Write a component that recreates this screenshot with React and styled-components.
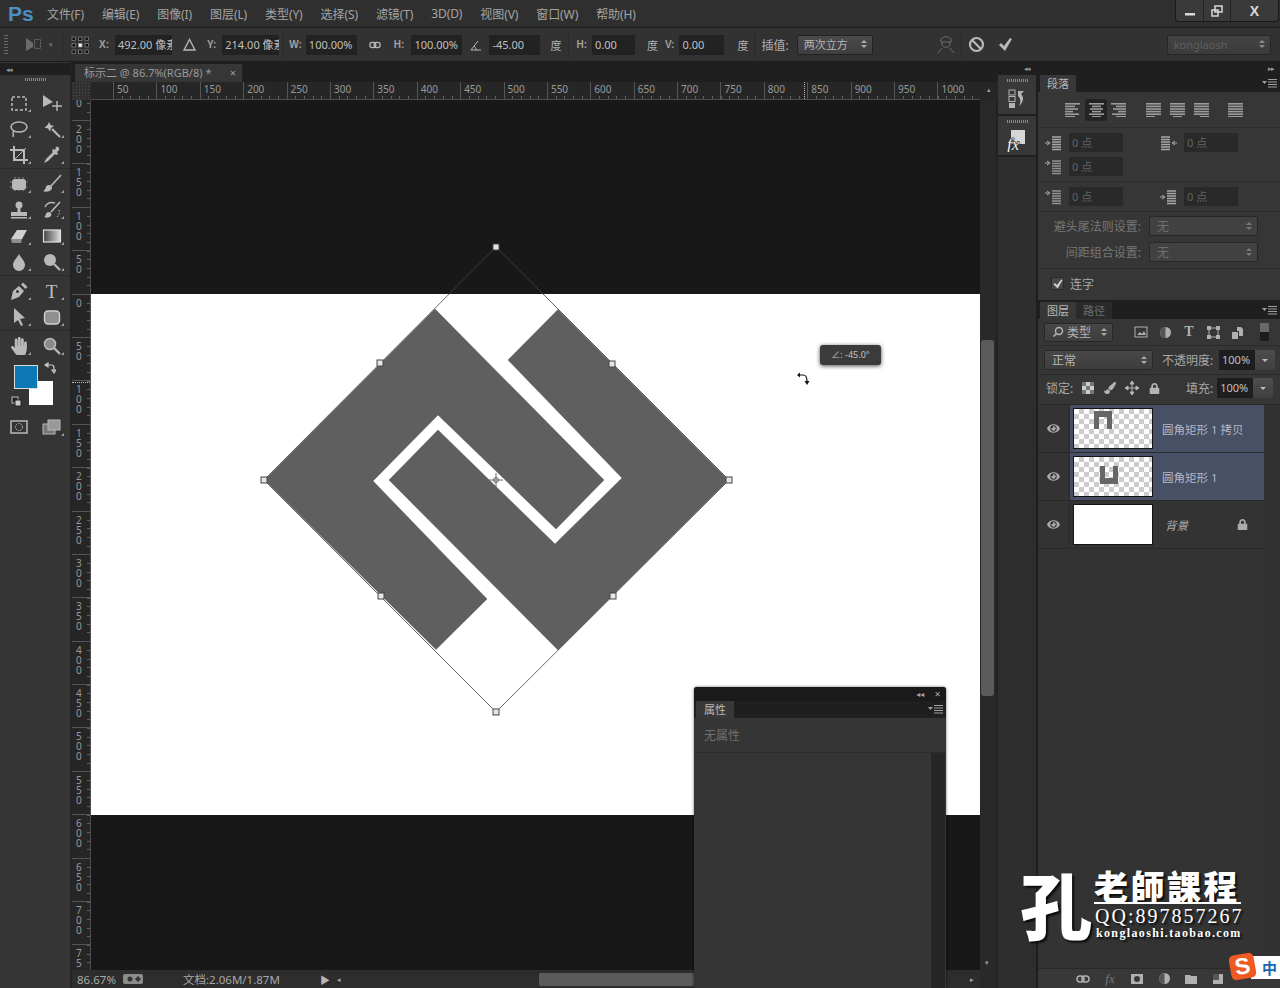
import React from "react";
import styled, { createGlobalStyle, css } from "styled-components";
import { FaHandPaper, FaLock, FaEye, FaPaintBrush } from "react-icons/fa";

const CJK = `"Noto Sans", "Noto Sans CJK SC", sans-serif`;

const GlobalStyle = createGlobalStyle`
    html, body {
        margin: 0;
        padding: 0;
        background: #2b2b2b;
    }
    * { box-sizing: border-box; }
    body {
        font-family: ${CJK};
        font-size: 11px;
        color: #b4b4b4;
        overflow: hidden;
    }
`;

// the little up/down arrows every dropdown has
const updown = (color, top = 5) => css`
    &::before, &::after {
        content: "";
        position: absolute;
        right: 5px;
        border-left: 3px solid transparent;
        border-right: 3px solid transparent;
    }
    &::before {
        top: ${top}px;
        border-bottom: 3px solid ${color};
    }
    &::after {
        top: ${top + 5}px;
        border-top: 3px solid ${color};
    }
`;

const Page = styled.div`
    position: relative;
    width: 1280px;
    height: 988px;
    overflow: hidden;
    background: #2e2e2e;
    display: flex;
    flex-direction: column;
`;

/* ---------- menu bar ---------- */
const MenuBar = styled.div`
    height: 28px;
    flex: none;
    display: flex;
    align-items: center;
    padding-left: 8px;
    background: #2f2f2f;
    border-bottom: 1px solid #1c1c1c;
    position: relative;
`;
const Logo = styled.div`
    width: 39px;
    font: bold 21px/28px "Liberation Sans", sans-serif;
    color: #4b8fc4;
`;
const MenuList = styled.div`
    display: flex;
    gap: 18px;
`;
const MenuItem = styled.span`
    font-size: 12px;
    white-space: nowrap;
    color: #a4a4a4;
    letter-spacing: -0.1px;
`;
const WindowButtons = styled.div`
    position: absolute;
    top: 0;
    right: 1px;
    width: 104px;
    height: 22px;
    display: flex;
    background: #3a3a3a;
    border: 1px solid #1a1a1a;
    border-top: 0;
    border-radius: 0 0 4px 4px;
`;
const WindowButton = styled.div`
    width: ${p => p.$w}px;
    display: flex;
    align-items: center;
    justify-content: center;
    color: #d8d8d8;
    font: bold 14px "Liberation Sans", sans-serif;
    border-right: ${p => (p.$last ? "0" : "1px solid #222")};
`;

/* ---------- options bar ---------- */
const OptionsBar = styled.div`
    height: 34px;
    flex: none;
    display: flex;
    align-items: center;
    background: #323232;
    border-bottom: 1px solid #1c1c1c;
    padding-left: 4px;
    position: relative;
`;
const Grip = styled.div`
    width: 4px;
    height: 20px;
    background: repeating-linear-gradient(to bottom, #6a6a6a 0 1px, transparent 1px 3px);
`;
const OptLabel = styled.span`
    margin-left: ${p => p.$ml || 0}px;
    margin-right: ${p => p.$mr || 4}px;
    font: bold 10px "Liberation Sans", sans-serif;
    color: #a0a0a0;
    white-space: nowrap;
`;
const OptInput = styled.div`
    width: ${p => p.$w}px;
    height: 20px;
    background: #222;
    color: #c0c0c0;
    font-size: 11px;
    line-height: 20px;
    padding-left: 3px;
    white-space: nowrap;
    overflow: hidden;
    flex: none;
`;
const OptUnit = styled.span`
    margin-left: ${p => p.$ml ?? 10}px;
    font-size: ${p => p.$fs || 11}px;
    color: #b0b0b0;
    flex: none;
`;
const OptSep = styled.div`
    width: 1px;
    height: 26px;
    margin: 0 ${p => p.$m || 5}px;
    background: #292929;
    flex: none;
`;
const OptIcon = styled.div`
    width: ${p => p.$w || 20}px;
    margin-left: ${p => p.$ml || 0}px;
    display: flex;
    justify-content: center;
    color: ${p => p.$c || "#b8b8b8"};
    font-size: ${p => p.$fs || 11}px;
    flex: none;
`;
const OptSelect = styled.div`
    width: ${p => p.$w}px;
    height: 20px;
    margin-left: ${p => p.$ml || 0}px;
    border: 1px solid #222;
    border-radius: 2px;
    background: linear-gradient(#4a4a4a, #3e3e3e);
    color: ${p => (p.$off ? "#6e6e6e" : "#b8b8b8")};
    font-size: 11px;
    line-height: 18px;
    padding-left: 6px;
    position: relative;
    flex: none;
    opacity: ${p => (p.$off ? 0.75 : 1)};
    ${updown("#aaa", 4)}
`;

/* ---------- main area ---------- */
const Workspace = styled.div`
    flex: 1;
    min-height: 0;
    display: flex;
    background: #222;
`;
const ToolColumn = styled.div`
    width: 72px;
    flex: none;
    display: flex;
    flex-direction: column;
    background: #353535;
    border-right: 2px solid #232323;
    padding-top: 1px;
`;
const CollapseBar = styled.div`
    height: ${p => p.$h || 12}px;
    flex: none;
    display: flex;
    align-items: center;
    justify-content: ${p => (p.$right ? "flex-end" : "flex-start")};
    padding: 0 6px;
    background: #1f1f1f;
    color: #9a9a9a;
    font-size: 7px;
    letter-spacing: -1px;
`;
const GripRow = styled.div`
    height: ${p => p.$h}px;
    flex: none;
    display: flex;
    justify-content: center;
    padding-top: ${p => p.$top || 3}px;
    &::before {
        content: "";
        width: 21px;
        height: 3px;
        background: repeating-linear-gradient(to right, #888 0 1px, transparent 1px 2px);
    }
`;
const ToolGroup = styled.div`
    display: grid;
    grid-template-columns: 33px 33px;
    grid-auto-rows: 26px;
    padding: 0 2px;
    border-bottom: ${p => (p.$plain ? "0" : "1px solid #2b2b2b")};
    margin-bottom: ${p => (p.$plain ? 0 : 2)}px;
`;
const Tool = styled.div`
    position: relative;
    display: flex;
    align-items: center;
    justify-content: center;
    color: #b9b9b9;
    &::after {
        content: "";
        display: ${p => (p.$more ? "block" : "none")};
        position: absolute;
        right: 4px;
        bottom: 4px;
        border-left: 3px solid transparent;
        border-bottom: 3px solid #a0a0a0;
    }
`;
const ToolT = styled.span`
    font: 19px/1 "Liberation Serif", serif;
    color: #bdbdbd;
`;
const ColorWell = styled.div`
    position: relative;
    height: 55px;
    flex: none;
`;
const Swatch = styled.div`
    position: absolute;
    width: 24px;
    height: 24px;
    left: ${p => p.$x}px;
    top: ${p => p.$y}px;
    background: ${p => p.$c};
    border: 1px solid ${p => p.$b};
`;
const MiniIcon = styled.div`
    position: absolute;
    left: ${p => p.$x}px;
    top: ${p => p.$y}px;
    color: #c8c8c8;
    line-height: 0;
`;

/* ---------- document ---------- */
const DocColumn = styled.div`
    width: 926px;
    flex: none;
    display: flex;
    flex-direction: column;
    position: relative;
`;
const TabStrip = styled.div`
    height: 20px;
    flex: none;
    display: flex;
    align-items: flex-end;
    padding-left: 3px;
    background: #1f1f1f;
`;
const DocTab = styled.div`
    width: 167px;
    height: 18px;
    background: #363636;
    color: #9a9a9a;
    font-size: 11px;
    line-height: 18px;
    padding-left: 9px;
    display: flex;
    justify-content: space-between;
    padding-right: 6px;
    white-space: nowrap;
`;
const RulerTop = styled.div`
    height: 18px;
    flex: none;
    display: flex;
    background: #262626;
`;
const RulerCorner = styled.div`
    width: 19px;
    flex: none;
    background-color: #303030;
    background-image: radial-gradient(#4d4d4d 0.6px, transparent 0.7px);
    background-size: 3px 3px;
`;
const RulerTrack = styled.div`
    width: 889px;
    flex: none;
    display: flex;
    padding-left: 22px;
    position: relative;
    background: repeating-linear-gradient(to right, #606060 0 1px, transparent 1px 8.68px) 22px bottom / 100% 3px no-repeat;
    border-bottom: 1px solid #4d4d4d;
    &::after {
        content: "";
        position: absolute;
        left: 713px;
        top: 0;
        height: 100%;
        border-left: 1px dotted #bbb;
    }
`;
const HTick = styled.div`
    width: 43.4px;
    flex: none;
    border-left: 1px solid #555;
    padding-left: 3px;
    font-size: 10px;
    line-height: 15px;
    color: #999;
`;
const RulerEnd = styled.div`
    flex: 1;
    color: #999;
    font-size: 7px;
    text-align: center;
    line-height: 16px;
`;
const DocBody = styled.div`
    flex: 1;
    min-height: 0;
    display: flex;
`;
const RulerLeft = styled.div`
    width: 19px;
    flex: none;
    display: flex;
    flex-direction: column;
    position: relative;
    background:
        repeating-linear-gradient(to bottom, #606060 0 1px, transparent 1px 8.68px) right 3px / 3px 100% no-repeat,
        #262626;
    border-right: 1px solid #4d4d4d;
    overflow: hidden;
    &::after {
        content: "";
        position: absolute;
        top: 282px;
        left: 0;
        width: 100%;
        border-top: 1px dotted #bbb;
    }
`;
const VTick = styled.div`
    height: ${p => p.$h}px;
    flex: none;
    border-top: ${p => (p.$first ? "0" : "1px solid #555")};
    padding: ${p => (p.$first ? 0 : 3)}px 0 0 4px;
    width: 100%;
`;
const VDigits = styled.div`
    width: 7px;
    font-size: 10px;
    line-height: ${p => (p.$tight ? 7 : 10)}px;
    color: #999;
    word-break: break-all;
`;
const Canvas = styled.div`
    width: 889px;
    flex: none;
    position: relative;
    display: flex;
    flex-direction: column;
    background: #181818;
`;
const Pasteboard = styled.div`
    flex: ${p => (p.$h ? `0 0 ${p.$h}px` : "1")};
    background: #181818;
`;
const DocSheet = styled.div`
    height: 521px;
    flex: none;
    background: #fff;
`;
const Artwork = styled.svg`
    position: absolute;
    inset: 0;
    width: 100%;
    height: 100%;
`;
const AngleTip = styled.div`
    position: absolute;
    left: 729px;
    top: 245px;
    width: 61px;
    height: 20px;
    border-radius: 3px;
    background: #3b3b3b;
    box-shadow: 0 1px 4px rgba(0, 0, 0, 0.7);
    color: #c4c4c4;
    font-size: 9px;
    line-height: 20px;
    text-align: center;
`;
const CursorMark = styled.div`
    position: absolute;
    left: 705px;
    top: 272px;
    line-height: 0;
`;
const VScroll = styled.div`
    width: 18px;
    flex: none;
    position: relative;
    background: #292929;
    border-right: 2px solid #222;
`;
const VThumb = styled.div`
    position: absolute;
    left: 1px;
    top: 240px;
    width: 13px;
    height: 356px;
    border-radius: 3px;
    background: #5b5b5b;
`;
const VDown = styled.span`
    position: absolute;
    left: 5px;
    top: 858px;
    font-size: 7px;
    color: #999;
`;
const StatusBar = styled.div`
    position: absolute;
    left: 0;
    right: 18px;
    bottom: 0;
    height: 18px;
    display: flex;
    align-items: center;
    background: #2d2d2d;
    font-size: 11.5px;
    color: #a8a8a8;
`;
const StatusZoom = styled.span`
    margin-left: 5px;
    width: 46px;
`;
const StatusBadge = styled.div`
    width: 20px;
    height: 10px;
    border-radius: 2px;
    background: #8c8c8c;
    display: flex;
    justify-content: center;
    align-items: center;
    line-height: 0;
`;
const StatusDoc = styled.span`
    margin-left: 40px;
    width: 137px;
    white-space: nowrap;
`;
const ScrollArrow = styled.span`
    font-size: ${p => p.$s || 7}px;
    color: ${p => p.$c || "#aaa"};
    margin-left: ${p => p.$ml || 0}px;
    flex: none;
`;
const HThumb = styled.div`
    width: 155px;
    height: 13px;
    margin-left: 198px;
    flex: none;
    background: #5b5b5b;
    border-radius: 2px;
`;

/* ---------- floating properties panel ---------- */
const FloatPanel = styled.div`
    position: absolute;
    left: 622px;
    top: 625px;
    width: 252px;
    height: 301px;
    display: flex;
    flex-direction: column;
    background: #353535;
    border-radius: 3px 3px 0 0;
    box-shadow: 0 0 3px rgba(0, 0, 0, 0.6);
`;
const FloatTitle = styled.div`
    height: 14px;
    flex: none;
    display: flex;
    justify-content: flex-end;
    align-items: center;
    gap: 10px;
    padding-right: 5px;
    background: #1a1a1a;
    border-radius: 3px 3px 0 0;
    color: #a4a4a4;
    font: bold 8px "Liberation Sans", "DejaVu Sans", sans-serif;
`;
const FloatInfo = styled.div`
    height: 35px;
    flex: none;
    border-bottom: 1px solid #2b2b2b;
    padding-left: 10px;
    font-size: 12px;
    line-height: 36px;
    color: #707070;
`;
const FloatBody = styled.div`
    flex: 1;
    display: flex;
    justify-content: flex-end;
    padding-right: 1px;
    &::after {
        content: "";
        width: 14px;
        background: #262626;
    }
`;

/* ---------- panels ---------- */
const TabHeader = styled.div`
    height: 17px;
    flex: none;
    display: flex;
    align-items: stretch;
    padding-left: 2px;
    background: #1f1f1f;
    position: relative;
`;
const PanelTab = styled.div`
    width: ${p => p.$w || 36}px;
    background: ${p => (p.$active ? "#383838" : "#2a2a2a")};
    color: ${p => (p.$active ? "#b8b8b8" : "#6f6f6f")};
    font-size: 11px;
    line-height: 17px;
    text-align: center;
`;
const PanelMenu = styled.div`
    position: absolute;
    right: 3px;
    top: 4px;
    width: 15px;
    height: 9px;
    color: #a0a0a0;
    line-height: 0;
`;
const Dock = styled.div`
    width: 40px;
    flex: none;
    display: flex;
    flex-direction: column;
    background: #2e2e2e;
    border-right: 2px solid #1e1e1e;
`;
const DockGroup = styled.div`
    height: 41px;
    flex: none;
    display: flex;
    flex-direction: column;
    align-items: center;
    background: #383838;
    border-bottom: 2px solid #202020;
    gap: 6px;
`;
const RightColumn = styled.div`
    width: 242px;
    flex: none;
    display: flex;
    flex-direction: column;
    position: relative;
    background: #323232;
`;
const ParagraphPanel = styled.div`
    height: 227px;
    flex: none;
    display: flex;
    flex-direction: column;
    background: #363636;
    border-bottom: 2px solid #1f1f1f;
`;
const AlignRow = styled.div`
    height: 36px;
    flex: none;
    display: flex;
    align-items: center;
    padding-left: 23px;
    border-bottom: 1px solid #2d2d2d;
    color: #9c9c9c;
`;
const AlignButton = styled.div`
    width: 22px;
    height: 22px;
    margin-left: ${p => p.$ml || 0}px;
    display: flex;
    align-items: center;
    justify-content: center;
    border-radius: 3px;
    background: ${p => (p.$on ? "#232323" : "transparent")};
`;
const IndentBlock = styled.div`
    padding: 5px 0;
    display: flex;
    flex-direction: column;
    gap: 5px;
    border-bottom: 1px solid #2d2d2d;
`;
const IndentRow = styled.div`
    height: 19px;
    display: flex;
    align-items: center;
    padding-left: 7px;
`;
const IndentIcon = styled.div`
    width: 17px;
    margin-left: ${p => p.$ml || 0}px;
    margin-right: ${p => p.$mr || 7}px;
    color: #a8a8a8;
    line-height: 0;
    flex: none;
`;
const PointInput = styled.div`
    width: 54px;
    height: 19px;
    background: #292929;
    color: #636363;
    font-size: 11px;
    line-height: 19px;
    padding-left: 3px;
    flex: none;
`;
const KinsokuBlock = styled.div`
    padding: 4px 0 6px;
    display: flex;
    flex-direction: column;
    gap: 6px;
    border-bottom: 1px solid #2d2d2d;
`;
const KinsokuRow = styled.div`
    height: 20px;
    display: flex;
    align-items: center;
    justify-content: flex-end;
    padding-right: 22px;
    gap: 8px;
    color: #777;
    font-size: 12px;
`;
const PanelSelect = styled.div`
    width: ${p => p.$w}px;
    height: ${p => p.$h || 20}px;
    position: relative;
    flex: none;
    display: flex;
    align-items: center;
    gap: 3px;
    background: ${p => (p.$dim ? "#414141" : "linear-gradient(#484848, #3d3d3d)")};
    border: 1px solid #272727;
    border-radius: 2px;
    color: ${p => (p.$dim ? "#6f6f6f" : "#b5b5b5")};
    font-size: 12px;
    padding-left: 7px;
    ${p => updown(p.$dim ? "#777" : "#aaa", p.$h ? 4 : 5)}
`;
const LigatureRow = styled.div`
    height: 31px;
    flex: none;
    display: flex;
    align-items: center;
    padding: 0 0 2px 13px;
    gap: 6px;
    color: #a8a8a8;
    font-size: 12px;
`;
const CheckBox = styled.div`
    width: 13px;
    height: 13px;
    background: #474747;
    border: 1px solid #2a2a2a;
    color: #cfcfcf;
    line-height: 0;
`;
const LayersPanel = styled.div`
    flex: 1;
    min-height: 0;
    display: flex;
    flex-direction: column;
    position: relative;
`;
const LayerControl = styled.div`
    height: ${p => p.$h}px;
    flex: none;
    display: flex;
    align-items: center;
    padding: 0 0 ${p => p.$pb || 0}px 6px;
    border-bottom: 1px solid #2a2a2a;
    background: #363636;
    color: #a8a8a8;
`;
const KindIcon = styled.div`
    width: 24px;
    margin-left: ${p => p.$ml || 0}px;
    display: flex;
    justify-content: center;
    color: #b0b0b0;
    flex: none;
    font: bold 14px "Liberation Serif", serif;
`;
const FilterSwitch = styled.div`
    width: 9px;
    height: 18px;
    margin-left: 11px;
    border-radius: 1px;
    background: linear-gradient(#696969 50%, #1d1d1d 50%);
`;
const RowLabel = styled.span`
    margin-left: ${p => p.$ml || 0}px;
    width: ${p => (p.$w ? `${p.$w}px` : "auto")};
    font-size: 12px;
    white-space: nowrap;
    flex: none;
`;
const Percent = styled.div`
    width: 36px;
    height: 20px;
    margin-left: 4px;
    flex: none;
    background: #1e1e1e;
    color: #c0c0c0;
    font-size: 11px;
    line-height: 20px;
    padding-left: 3px;
`;
const PercentDrop = styled.div`
    width: 20px;
    height: 20px;
    flex: none;
    background: linear-gradient(#4d4d4d, #404040);
    border-radius: 0 2px 2px 0;
    display: flex;
    align-items: center;
    justify-content: center;
    &::before {
        content: "";
        border-left: 3px solid transparent;
        border-right: 3px solid transparent;
        border-top: 3px solid #bdbdbd;
    }
`;
const LockIcon = styled.div`
    width: 22px;
    display: flex;
    justify-content: center;
    color: #b4b4b4;
    flex: none;
`;
const LayerList = styled.div`
    flex: 1;
    min-height: 0;
    width: 226px;
    display: flex;
    flex-direction: column;
    background: #333;
`;
const LayerRow = styled.div`
    height: 48px;
    flex: none;
    display: flex;
    align-items: center;
    border-bottom: 1px solid #2a2a2a;
    position: relative;
`;
const EyeCell = styled.div`
    width: 32px;
    align-self: stretch;
    flex: none;
    display: flex;
    align-items: center;
    justify-content: center;
    color: #aaa;
    border-right: 1px solid #2a2a2a;
`;
const LayerMain = styled.div`
    flex: 1;
    align-self: stretch;
    display: flex;
    align-items: center;
    padding-left: 3px;
    background: ${p => (p.$selected ? "#485066" : "transparent")};
`;
const Thumb = styled.div`
    width: 80px;
    height: 41px;
    flex: none;
    border: 1px solid #141414;
    background-color: #fff;
    background-image: ${p => (p.$clear
        ? `linear-gradient(45deg, #ccc 25%, transparent 25%, transparent 75%, #ccc 75%),
           linear-gradient(45deg, #ccc 25%, transparent 25%, transparent 75%, #ccc 75%)`
        : "none")};
    background-size: 10px 10px;
    background-position: 0 0, 5px 5px;
    display: flex;
    justify-content: center;
`;
const LayerName = styled.span`
    font-size: 11.5px;
    white-space: nowrap;
    color: ${p => (p.$bg ? "#a8a8a8" : "#b4b8c4")};
    font-style: ${p => (p.$bg ? "italic" : "normal")};
    margin-left: ${p => (p.$bg ? 12 : 9)}px;
`;
const LayerLock = styled.div`
    position: absolute;
    right: 16px;
    top: 18px;
    color: #aaa;
    line-height: 0;
`;
const LayerFooter = styled.div`
    height: 20px;
    flex: none;
    display: flex;
    align-items: center;
    padding-left: 37px;
    gap: 11px;
    background: #383838;
    border-top: 1px solid #292929;
    color: #b0b0b0;
`;
const FooterIcon = styled.div`
    width: 16px;
    display: flex;
    justify-content: center;
    color: ${p => p.$c || "#b0b0b0"};
    font: italic 13px "Liberation Serif", serif;
    flex: none;
`;

/* ---------- overlays ---------- */
const Watermark = styled.div`
    position: absolute;
    left: 1020px;
    top: 868px;
    width: 226px;
    height: 72px;
    display: flex;
    color: #fff;
    text-shadow: 2px 2px 2px rgba(0, 0, 0, 0.8);
    pointer-events: none;
`;
const WmBig = styled.div`
    width: 73px;
    font: 900 72px/70px "Noto Sans CJK TC", sans-serif;
    flex: none;
`;
const WmCol = styled.div`
    display: flex;
    flex-direction: column;
    padding-left: 1px;
`;
const WmTitle = styled.div`
    width: 147px;
    font: 900 34px/36px "Noto Sans CJK TC", sans-serif;
    letter-spacing: 2.5px;
    border-bottom: 2px solid #fff;
    height: 36px;
    white-space: nowrap;
    overflow: hidden;
`;
const WmQQ = styled.div`
    font: 20px/24px "Liberation Serif", serif;
    letter-spacing: 2px;
    white-space: nowrap;
    padding-left: 1px;
`;
const WmUrl = styled.div`
    font: bold 12px/11px "Liberation Serif", serif;
    letter-spacing: 1.35px;
    white-space: nowrap;
    padding-left: 2px;
`;
const ImeBadge = styled.div`
    position: absolute;
    left: 1229px;
    top: 953px;
    width: 51px;
    height: 29px;
    display: flex;
    align-items: center;
    justify-content: flex-end;
`;
const ImeBack = styled.div`
    position: absolute;
    left: 22px;
    top: 3px;
    width: 29px;
    height: 23px;
    background: #fff;
`;
const ImeText = styled.span`
    position: relative;
    margin-right: 3px;
    color: #1668b4;
    font: bold 15px "Noto Sans CJK SC", sans-serif;
`;
const ImeS = styled.div`
    position: absolute;
    left: 1px;
    top: 1px;
    width: 25px;
    height: 25px;
    border-radius: 5px;
    background: #ef5a23;
    transform: rotate(-10deg);
    color: #fff;
    font: 900 23px/25px "Liberation Sans", sans-serif;
    text-align: center;
`;

/* ---------- icons ---------- */
const Svg = ({ s = 20, w, h, vb = "0 0 20 20", children, ...rest }) => (
    <svg width={w || s} height={h || s} viewBox={vb} fill="currentColor" {...rest}>{children}</svg>
);
const Line = p => <g fill="none" stroke="currentColor" strokeWidth="1.5" {...p} />;

const MarqueeIcon = () => <Svg><rect x="3" y="4" width="14" height="13" fill="none" stroke="currentColor" strokeWidth="1.5" strokeDasharray="3 2" /></Svg>;
const MoveIcon = () => <Svg w={22} h={20} vb="0 0 22 20"><path d="M2 2l10 7-10 5z" /><path d="M16 8v10M11 13h10" stroke="currentColor" strokeWidth="1.4" /></Svg>;
const LassoIcon = () => <Svg><Line><ellipse cx="10" cy="8" rx="8" ry="5" /><path d="M5 12c-2 2 0 3-1 6" /></Line></Svg>;
const WandIcon = () => <Svg><path d="M7 3l1.5 3 3.5 1-3 2-1 3.500-2-3-3.500-1 3-2.500z" /><path d="M10 10l8 8" stroke="currentColor" strokeWidth="2.2" /></Svg>;
const CropIcon = () => <Svg><Line strokeWidth="2"><path d="M5 1v14h14" /><path d="M1 5h14v14" /></Line><path d="M6 14L17 3" stroke="currentColor" /></Svg>;
const DropperIcon = () => <Svg><path d="M14 2c2-1 4 1 3 3l-2 2 1 2-2 1-1-1-7 7-4 2 2-4 7-7-1-1 1-2 2 1z" /></Svg>;
const HealIcon = () => <Svg><rect x="3" y="5" width="14" height="11" rx="3" /><path d="M6 3v15M10 3v15M14 3v15M1 8h18M1 13h18" stroke="currentColor" strokeWidth="0.8" strokeDasharray="1.5 1" /></Svg>;
const BrushIcon = () => <Svg><path d="M19 1L9 12" stroke="currentColor" strokeWidth="1.6" /><path d="M7 11c3 0 4 3 2 5-2 2-6 2-8 1 2-1 2-2 3-4 0-1 1-2 3-2z" /></Svg>;
const StampIcon = () => <Svg><circle cx="10" cy="5" r="3.5" /><rect x="8.5" y="7" width="3" height="6" /><rect x="2" y="12" width="16" height="4" /><rect x="2" y="17" width="16" height="1.5" /></Svg>;
const HistoryIcon = () => <Svg><path d="M18 2L9 12" stroke="currentColor" strokeWidth="1.6" /><path d="M7 12c2 0 3 2 2 4-2 2-5 2-7 1 2-1 1-2 2-3 0-1 1-2 3-2z" /><path d="M3 7c2-4 6-5 10-4" fill="none" stroke="currentColor" strokeWidth="1.4" /><path d="M17 10c1 3 0 5-2 7" fill="none" stroke="currentColor" strokeWidth="1" strokeDasharray="1.5 1.5" /></Svg>;
const EraserIcon = () => <Svg><path d="M8 4h10l-5 9H2z" fill="#cfcfcf" /><path d="M2 13h11l-1 4H3z" fill="#8e8e8e" /></Svg>;
const GradientIcon = () => (
    <Svg><defs><linearGradient id="grad1"><stop offset="0" stopColor="#444" /><stop offset="1" stopColor="#ddd" /></linearGradient></defs>
        <rect x="1.5" y="4" width="17" height="12" fill="url(#grad1)" stroke="#ddd" strokeWidth="1.2" /></Svg>
);
const DropIcon = () => <Svg><path d="M10 2c2 4 6 7 6 11a6 6 0 0 1-12 0c0-4 4-7 6-11z" /></Svg>;
const DodgeIcon = () => <Svg><circle cx="8" cy="8" r="6" /><path d="M12 12l6 6" stroke="currentColor" strokeWidth="2.2" /></Svg>;
const PenIcon = () => (
    <Svg>
        <path fillRule="evenodd" d="M2 19l2-9 6-5 5 5-5 6zM8.500 9a1.500 1.500 0 1 0 0 3 1.500 1.500 0 0 0 0-3z" />
        <path d="M12 3.500l2-2 4.500 4.500-2 2z" />
    </Svg>
);
const ArrowIcon = () => <Svg><path d="M5 1l11 10-5 1 3 6-2 1-3-6-4 3z" /></Svg>;
const RoundRectIcon = () => <Svg><rect x="2.5" y="4" width="15" height="13" rx="3.5" fill="#8f8f8f" stroke="#cfcfcf" strokeWidth="1.4" /></Svg>;
const ZoomIcon = () => <Svg><circle cx="8" cy="8" r="5.5" fill="#8a8a8a" stroke="currentColor" strokeWidth="1.6" /><path d="M12 12l6 6" stroke="currentColor" strokeWidth="2.4" /></Svg>;
const MaskIcon = () => <Svg><rect x="2" y="4" width="16" height="12" fill="none" stroke="currentColor" strokeWidth="1.5" /><circle cx="10" cy="10" r="3.5" fill="none" stroke="currentColor" strokeDasharray="1.5 1" /></Svg>;
const ScreenIcon = () => <Svg><rect x="1" y="7" width="12" height="10" fill="#777" stroke="currentColor" /><rect x="6" y="3" width="12" height="10" fill="#999" stroke="currentColor" /></Svg>;

const RefPoint = () => (
    <Svg s={18} vb="0 0 18 18">
        {[0, 1, 2].map(r => [0, 1, 2].map(c => (
            <rect key={`${r}${c}`} x={1 + c * 6.5} y={1 + r * 6.5} width="3.5" height="3.5"
                fill={r === 1 && c === 1 ? "#fff" : "#111"} stroke="#8a8a8a" strokeWidth="0.7" />
        )))}
    </Svg>
);
const TransformIcon = () => <Svg s={17} vb="0 0 17 17" style={{ color: "#6c6c6c" }}><path d="M1 2l7 5v4l-7 4z" /><rect x="9.500" y="3.500" width="6" height="9" fill="none" stroke="currentColor" strokeDasharray="2 1" /></Svg>;
const TriangleOutline = () => <Svg s={13} vb="0 0 13 13"><path d="M6.500 1.500L12 12H1z" fill="none" stroke="currentColor" strokeWidth="1.4" /></Svg>;
const LinkIcon = ({ s = 12 }) => <Svg s={s} vb="0 0 14 14"><Line strokeWidth="1.5"><rect x="1" y="4" width="7" height="6" rx="3" /><rect x="6" y="4" width="7" height="6" rx="3" /></Line></Svg>;
const AngleIcon = () => <Svg s={12} vb="0 0 12 12"><path d="M1 11h10M1 11L8 2M6 11c0-2-1-3-2-4" fill="none" stroke="currentColor" /></Svg>;
const WarpIcon = () => <Svg s={20} vb="0 0 20 20"><Line strokeWidth="1"><path d="M5 4c3-3 7-3 10 0v3H5zM6 7v3c1 3 7 3 8 0V7M6 13l-4 5M14 13l4 5" /></Line></Svg>;
const CancelIcon = () => <Svg s={17} vb="0 0 17 17"><circle cx="8.500" cy="8.500" r="6.500" fill="none" stroke="currentColor" strokeWidth="2.2" /><path d="M4 4l9 9" stroke="currentColor" strokeWidth="2.2" /></Svg>;
const CheckIcon = ({ s = 17 }) => <Svg s={s} vb="0 0 17 17"><path d="M2 9l2-2 3 3 6-8 2 1-7 12z" /></Svg>;
const MenuGlyph = () => <Svg w={15} h={9} vb="0 0 15 9"><path d="M0 2h5L2.500 5z" /><path d="M6 .5h9M6 3h9M6 5.500h9M6 8h9" stroke="currentColor" /></Svg>;
const SearchGlyph = () => <Svg s={12} vb="0 0 12 12" style={{ flex: "none" }}><circle cx="7" cy="5" r="3.500" fill="none" stroke="currentColor" strokeWidth="1.4" /><path d="M4.500 7.500L1.500 10.500" stroke="currentColor" strokeWidth="1.6" /></Svg>;

const AlignGlyph = ({ rows }) => (
    <Svg s={15} vb="0 0 15 15">
        {rows.map((r, i) => <rect key={i} x={r[0]} y={1 + i * 2.6} width={r[1]} height="1.6" />)}
    </Svg>
);
const alignRows = {
    left: [[0, 15], [0, 10], [0, 13], [0, 8], [0, 14], [0, 10]],
    center: [[0, 15], [3, 9], [1, 13], [3, 9], [0, 15], [3, 9]],
    right: [[0, 15], [5, 10], [2, 13], [7, 8], [1, 14], [5, 10]],
    jl: [[0, 15], [0, 15], [0, 15], [0, 15], [0, 15], [0, 9]],
    jc: [[0, 15], [0, 15], [0, 15], [0, 15], [0, 15], [3, 9]],
    jr: [[0, 15], [0, 15], [0, 15], [0, 15], [0, 15], [6, 9]],
    ja: [[0, 15], [0, 15], [0, 15], [0, 15], [0, 15], [0, 15]],
};
const IndentGlyph = ({ dir = "r", top }) => (
    <Svg w={17} h={16} vb="0 0 17 16">
        {dir === "r"
            ? <path d={top ? "M0 4h4M2 2l3 2-3 2" : "M0 8h4M2 6l3 2-3 2"} fill="none" stroke="currentColor" />
            : <path d="M0 8h4M2 6l3 2-3 2" fill="none" stroke="currentColor" transform="translate(17 0) scale(-1 1)" />}
        <g transform={dir === "r" ? "translate(7 0)" : "translate(1 0)"}>
            <path d="M0 2h9M0 4.500h9M0 7h9M0 9.500h9M0 12h9M0 14.500h9" stroke="currentColor" strokeWidth="1.5" opacity={top ? 0.8 : 1} />
        </g>
    </Svg>
);
const EyeIcon = () => <FaEye size={13} />;
const SmallLock = ({ s = 11 }) => <FaLock size={s} />;

const menus = ["文件(F)", "编辑(E)", "图像(I)", "图层(L)", "类型(Y)", "选择(S)", "滤镜(T)", "3D(D)", "视图(V)", "窗口(W)", "帮助(H)"];
const hLabels = Array.from({ length: 20 }, (_, i) => (i + 1) * 50);
const vLabels = [200, 150, 100, 50, 0, 50, 100, 150, 200, 250, 300, 350, 400, 450, 500, 550, 600, 650, 700, 75];

const handles = [[496, 247], [380, 363], [612, 364], [264, 480], [729, 480], [381, 596], [613, 596], [496, 712]];

const LogoArt = () => (
    <Artwork viewBox="91 100 889 888">
        <polygon fill="#5f5f5f" stroke="#5f5f5f" strokeWidth="0.5" strokeLinejoin="round"
            points="435,309 604,480 556,529 438,415 373,481 487,599 436,649.500 264.500,480" />
        <polygon fill="#5f5f5f" stroke="#5f5f5f" strokeWidth="0.5" strokeLinejoin="round"
            points="558,309.500 728.500,480 558,650 389,480 438,430 555,544 622,478 508,360" />
        <polygon points="496,247 729,480 496,712 264,480" fill="none" stroke="#444" strokeWidth="0.8" />
        {handles.map(([x, y]) => (
            <rect key={`${x}-${y}`} x={x - 3} y={y - 3} width="6" height="6" fill="#e6e6e6" stroke="#444" strokeWidth="1" />
        ))}
        <g stroke="#666" strokeWidth="1" fill="none">
            <circle cx="496" cy="480" r="2.500" />
            <path d="M496 473v14M489 480h14" />
        </g>
    </Artwork>
);

const LayerShape = ({ flip, left }) => (
    <svg width="20" height="18" viewBox="0 0 20 18" style={{ marginLeft: left, marginTop: flip ? 9 : 2 }}>
        <path fill="#666" d={flip ? "M1 0h5v12h8V0h5v18H1z" : "M1 0h18v18h-5V6H6v12H1z"} />
    </svg>
);

const App = () => (
    <Page>
        <GlobalStyle />
        <MenuBar>
            <Logo>Ps</Logo>
            <MenuList>
                {menus.map(m => <MenuItem key={m}>{m}</MenuItem>)}
            </MenuList>
            <WindowButtons>
                <WindowButton $w={28}><Svg s={12} vb="0 0 12 12"><rect x="1" y="8" width="10" height="2.500" /></Svg></WindowButton>
                <WindowButton $w={27}>
                    <Svg s={12} vb="0 0 12 12"><rect x="4" y="1" width="7" height="6" fill="none" stroke="currentColor" strokeWidth="1.5" /><rect x="1" y="5" width="6" height="6" fill="none" stroke="currentColor" strokeWidth="1.5" /></Svg>
                </WindowButton>
                <WindowButton $w={47} $last>X</WindowButton>
            </WindowButtons>
        </MenuBar>

        <OptionsBar>
            <Grip />
            <OptIcon $w={30} $ml={10}><TransformIcon /></OptIcon>
            <OptIcon $w={6} $c="#777" $fs={7}>▾</OptIcon>
            <OptSep $m={8} />
            <RefPoint />
            <OptLabel $ml={10} $mr={6}>X:</OptLabel>
            <OptInput $w={57}>492.00 像素</OptInput>
            <OptIcon $w={35}><TriangleOutline /></OptIcon>
            <OptLabel $mr={6}>Y:</OptLabel>
            <OptInput $w={57}>214.00 像素</OptInput>
            <OptSep $m={4} />
            <OptLabel $ml={1} $mr={4}>W:</OptLabel>
            <OptInput $w={51}>100.00%</OptInput>
            <OptIcon $w={37}><LinkIcon /></OptIcon>
            <OptLabel $mr={7}>H:</OptLabel>
            <OptInput $w={51}>100.00%</OptInput>
            <OptIcon $w={27}><AngleIcon /></OptIcon>
            <OptInput $w={51}>-45.00</OptInput>
            <OptUnit>度</OptUnit>
            <OptSep $m={7} />
            <OptLabel $mr={5}>H:</OptLabel>
            <OptInput $w={43}>0.00</OptInput>
            <OptUnit $ml={12}>度</OptUnit>
            <OptLabel $ml={7} $mr={5}>V:</OptLabel>
            <OptInput $w={45}>0.00</OptInput>
            <OptUnit $ml={13}>度</OptUnit>
            <OptSep $m={6} />
            <OptUnit $ml={0} $fs={12}>插值:</OptUnit>
            <OptSelect $w={76} $ml={8}>两次立方</OptSelect>
            <OptIcon $ml={63} $w={20} $c="#6c6c6c"><WarpIcon /></OptIcon>
            <OptSep $m={5} />
            <OptIcon $w={20}><CancelIcon /></OptIcon>
            <OptIcon $ml={9} $w={20}><CheckIcon /></OptIcon>
            <OptSelect $w={104} $ml={151} $off>konglaosh</OptSelect>
        </OptionsBar>

        <Workspace>
            <ToolColumn>
                <CollapseBar>◂◂</CollapseBar>
                <GripRow $h={15} />
                <ToolGroup>
                    <Tool $more><MarqueeIcon /></Tool><Tool><MoveIcon /></Tool>
                    <Tool $more><LassoIcon /></Tool><Tool $more><WandIcon /></Tool>
                    <Tool $more><CropIcon /></Tool><Tool $more><DropperIcon /></Tool>
                </ToolGroup>
                <ToolGroup>
                    <Tool $more><HealIcon /></Tool><Tool $more><BrushIcon /></Tool>
                    <Tool $more><StampIcon /></Tool><Tool $more><HistoryIcon /></Tool>
                    <Tool $more><EraserIcon /></Tool><Tool $more><GradientIcon /></Tool>
                    <Tool $more><DropIcon /></Tool><Tool $more><DodgeIcon /></Tool>
                </ToolGroup>
                <ToolGroup>
                    <Tool $more><PenIcon /></Tool><Tool $more><ToolT>T</ToolT></Tool>
                    <Tool $more><ArrowIcon /></Tool><Tool $more><RoundRectIcon /></Tool>
                </ToolGroup>
                <ToolGroup $plain>
                    <Tool $more><FaHandPaper size={18} /></Tool><Tool $more><ZoomIcon /></Tool>
                </ToolGroup>
                <ColorWell>
                    <Swatch $x={29} $y={22} $c="#fff" $b="#fff" />
                    <Swatch $x={14} $y={6} $c="#0c78b4" $b="#ddd" />
                    <MiniIcon $x={44} $y={3}>
                        <Svg s={12} vb="0 0 12 12"><path d="M2 3h6c2 0 2 2 2 6M1 3l3-2v4zM10 11L8 8h4z" fill="none" stroke="currentColor" strokeWidth="1.2" /></Svg>
                    </MiniIcon>
                    <MiniIcon $x={11} $y={37}>
                        <Svg s={11} vb="0 0 11 11"><rect x="1" y="1" width="6" height="6" fill="#222" stroke="#bbb" /><rect x="4" y="4" width="6" height="6" fill="#ccc" stroke="#222" /></Svg>
                    </MiniIcon>
                </ColorWell>
                <ToolGroup $plain>
                    <Tool><MaskIcon /></Tool><Tool $more><ScreenIcon /></Tool>
                </ToolGroup>
            </ToolColumn>

            <DocColumn>
                <TabStrip>
                    <DocTab>标示二 @ 86.7%(RGB/8) *<span>×</span></DocTab>
                </TabStrip>
                <RulerTop>
                    <RulerCorner />
                    <RulerTrack>
                        {hLabels.map(v => <HTick key={v}>{v}</HTick>)}
                    </RulerTrack>
                    <RulerEnd>▴</RulerEnd>
                </RulerTop>
                <DocBody>
                    <RulerLeft>
                        <VTick $h={20} $first><VDigits $tight>0</VDigits></VTick>
                        {vLabels.map((v, i) => <VTick key={i} $h={43.4}><VDigits>{v}</VDigits></VTick>)}
                    </RulerLeft>
                    <Canvas>
                        <Pasteboard $h={194} />
                        <DocSheet />
                        <Pasteboard />
                        <LogoArt />
                        <AngleTip>∠: -45.0°</AngleTip>
                        <CursorMark>
                            <Svg s={14} vb="0 0 14 14">
                                <path d="M3 3h4c3 0 4 2 4 6" fill="none" stroke="#111" strokeWidth="1.2" />
                                <path d="M1 3l3-2.500v5zM11 13L8.500 9h5z" fill="#111" />
                            </Svg>
                        </CursorMark>
                    </Canvas>
                    <VScroll><VThumb /><VDown>▾</VDown></VScroll>
                </DocBody>
                <StatusBar>
                    <StatusZoom>86.67%</StatusZoom>
                    <StatusBadge>
                        <Svg w={16} h={8} vb="0 0 16 8"><circle cx="5" cy="4" r="2.500" fill="#333" /><path d="M10 4l3-3 3 3-3 3z" fill="#333" /></Svg>
                    </StatusBadge>
                    <StatusDoc>文档:2.06M/1.87M</StatusDoc>
                    <ScrollArrow $s={10} $c="#b8b8b8">▶</ScrollArrow>
                    <ScrollArrow $ml={7}>◂</ScrollArrow>
                    <HThumb />
                    <ScrollArrow $ml={276}>▸</ScrollArrow>
                </StatusBar>
                <FloatPanel>
                    <FloatTitle><span>◂◂</span><span>✕</span></FloatTitle>
                    <TabHeader>
                        <PanelTab $active $w={38}>属性</PanelTab>
                        <PanelMenu><MenuGlyph /></PanelMenu>
                    </TabHeader>
                    <FloatInfo>无属性</FloatInfo>
                    <FloatBody />
                </FloatPanel>
            </DocColumn>

            <Dock>
                <CollapseBar $h={13} $right>◂◂</CollapseBar>
                <DockGroup>
                    <GripRow $h={8} $top={4} />
                    <Svg w={18} h={20} vb="0 0 18 20"><rect x="1" y="1" width="6" height="5" fill="none" stroke="currentColor" /><rect x="1" y="7.500" width="6" height="5" fill="none" stroke="currentColor" /><rect x="1" y="14" width="6" height="5" /><path d="M10 2h6l-3 3c3 3 3 8-2 12 2-4 2-7-1-10z" /></Svg>
                </DockGroup>
                <DockGroup>
                    <GripRow $h={8} $top={4} />
                    <Svg w={20} h={22} vb="0 0 20 22">
                        <rect x="4" y="0" width="14" height="14" fill="#d6d6d6" />
                        <text x="0" y="20" fontSize="17" fontStyle="italic" fontFamily="Liberation Serif" fill="#eee" stroke="#333" strokeWidth="1.4" paintOrder="stroke">fx</text>
                    </Svg>
                </DockGroup>
            </Dock>

            <RightColumn>
                <CollapseBar $h={13} $right>▸▸</CollapseBar>
                <ParagraphPanel>
                    <TabHeader>
                        <PanelTab $active>段落</PanelTab>
                        <PanelMenu><MenuGlyph /></PanelMenu>
                    </TabHeader>
                    <AlignRow>
                        <AlignButton><AlignGlyph rows={alignRows.left} /></AlignButton>
                        <AlignButton $ml={2} $on><AlignGlyph rows={alignRows.center} /></AlignButton>
                        <AlignButton><AlignGlyph rows={alignRows.right} /></AlignButton>
                        <AlignButton $ml={13}><AlignGlyph rows={alignRows.jl} /></AlignButton>
                        <AlignButton $ml={2}><AlignGlyph rows={alignRows.jc} /></AlignButton>
                        <AlignButton $ml={2}><AlignGlyph rows={alignRows.jr} /></AlignButton>
                        <AlignButton $ml={12}><AlignGlyph rows={alignRows.ja} /></AlignButton>
                    </AlignRow>
                    <IndentBlock>
                        <IndentRow>
                            <IndentIcon><IndentGlyph /></IndentIcon>
                            <PointInput>0 点</PointInput>
                            <IndentIcon $ml={37}><IndentGlyph dir="l" /></IndentIcon>
                            <PointInput>0 点</PointInput>
                        </IndentRow>
                        <IndentRow>
                            <IndentIcon><IndentGlyph top /></IndentIcon>
                            <PointInput>0 点</PointInput>
                        </IndentRow>
                    </IndentBlock>
                    <IndentBlock>
                        <IndentRow>
                            <IndentIcon><IndentGlyph top /></IndentIcon>
                            <PointInput>0 点</PointInput>
                            <IndentIcon $ml={37}><IndentGlyph /></IndentIcon>
                            <PointInput>0 点</PointInput>
                        </IndentRow>
                    </IndentBlock>
                    <KinsokuBlock>
                        <KinsokuRow>避头尾法则设置:<PanelSelect $w={109} $dim>无</PanelSelect></KinsokuRow>
                        <KinsokuRow>间距组合设置:<PanelSelect $w={109} $dim>无</PanelSelect></KinsokuRow>
                    </KinsokuBlock>
                    <LigatureRow>
                        <CheckBox><CheckIcon s={12} /></CheckBox>连字
                    </LigatureRow>
                </ParagraphPanel>

                <LayersPanel>
                    <TabHeader>
                        <PanelTab $active>图层</PanelTab>
                        <PanelTab>路径</PanelTab>
                        <PanelMenu><MenuGlyph /></PanelMenu>
                    </TabHeader>
                    <LayerControl $h={27}>
                        <PanelSelect $w={69} $h={19}><SearchGlyph />类型</PanelSelect>
                        <KindIcon $ml={16}><Svg s={14} vb="0 0 14 14"><rect x="1" y="2" width="12" height="10" fill="none" stroke="currentColor" /><path d="M3 10l3-3 2 2 2-3 2 4z" /></Svg></KindIcon>
                        <KindIcon><Svg s={13} vb="0 0 13 13"><circle cx="6.500" cy="6.500" r="5.500" /><path d="M6.500 1a5.500 5.500 0 0 0 0 11z" fill="#555" /></Svg></KindIcon>
                        <KindIcon>T</KindIcon>
                        <KindIcon><Svg s={13} vb="0 0 13 13"><rect x="2" y="2" width="9" height="9" fill="none" stroke="currentColor" /><path d="M0 0h4v4H0zM9 0h4v4H9zM0 9h4v4H0zM9 9h4v4H9z" /></Svg></KindIcon>
                        <KindIcon><Svg s={13} vb="0 0 13 13"><path d="M6 1h4l2 2v7H8V5H6zM1 6h6v7H1z" /></Svg></KindIcon>
                        <FilterSwitch />
                    </LayerControl>
                    <LayerControl $h={29}>
                        <PanelSelect $w={109}>正常</PanelSelect>
                        <RowLabel $ml={9} $w={53}>不透明度:</RowLabel>
                        <Percent>100%</Percent>
                        <PercentDrop />
                    </LayerControl>
                    <LayerControl $h={30} $pb={3}>
                        <RowLabel $ml={2} $w={31}>锁定:</RowLabel>
                        <LockIcon><Svg s={12} vb="0 0 12 12"><rect width="12" height="12" fill="#ccc" /><path d="M0 0h4v4H0zM8 0h4v4H8zM4 4h4v4H4zM0 8h4v4H0zM8 8h4v4H8z" fill="#777" /></Svg></LockIcon>
                        <LockIcon><FaPaintBrush size={12} /></LockIcon>
                        <LockIcon><Svg s={14} vb="0 0 14 14"><path d="M7 1v12M1 7h12M7 0L5 3h4zM7 14l-2-3h4zM0 7l3-2v4zM14 7l-3-2v4z" stroke="currentColor" /></Svg></LockIcon>
                        <LockIcon><SmallLock /></LockIcon>
                        <RowLabel $ml={21}>填充:</RowLabel>
                        <Percent>100%</Percent>
                        <PercentDrop />
                    </LayerControl>
                    <LayerList>
                        <LayerRow>
                            <EyeCell><EyeIcon /></EyeCell>
                            <LayerMain $selected>
                                <Thumb $clear><LayerShape left={-20} /></Thumb>
                                <LayerName>圆角矩形 1 拷贝</LayerName>
                            </LayerMain>
                        </LayerRow>
                        <LayerRow>
                            <EyeCell><EyeIcon /></EyeCell>
                            <LayerMain $selected>
                                <Thumb $clear><LayerShape flip left={-8} /></Thumb>
                                <LayerName>圆角矩形 1</LayerName>
                            </LayerMain>
                        </LayerRow>
                        <LayerRow>
                            <EyeCell><EyeIcon /></EyeCell>
                            <LayerMain>
                                <Thumb />
                                <LayerName $bg>背景</LayerName>
                            </LayerMain>
                            <LayerLock><SmallLock /></LayerLock>
                        </LayerRow>
                    </LayerList>
                    <LayerFooter>
                        <FooterIcon><LinkIcon s={14} /></FooterIcon>
                        <FooterIcon $c="#777">fx</FooterIcon>
                        <FooterIcon><Svg s={14} vb="0 0 14 14"><path fillRule="evenodd" d="M1 2h12v10H1zM7 4a3 3 0 1 0 0 6 3 3 0 0 0 0-6z" /></Svg></FooterIcon>
                        <FooterIcon><Svg s={13} vb="0 0 13 13"><circle cx="6.500" cy="6.500" r="5.500" /><path d="M6.500 1a5.500 5.500 0 0 0 0 11z" fill="#555" /></Svg></FooterIcon>
                        <FooterIcon><Svg s={14} vb="0 0 14 14"><path d="M1 3h5l1 1h6v8H1z" /></Svg></FooterIcon>
                        <FooterIcon><Svg s={14} vb="0 0 14 14"><path d="M2 2h10v10H2z" /><path d="M2 2h6v6H2z" fill="#555" /></Svg></FooterIcon>
                    </LayerFooter>
                </LayersPanel>
            </RightColumn>
        </Workspace>

        <Watermark>
            <WmBig>孔</WmBig>
            <WmCol>
                <WmTitle>老師課程</WmTitle>
                <WmQQ>QQ:897857267</WmQQ>
                <WmUrl>konglaoshi.taobao.com</WmUrl>
            </WmCol>
        </Watermark>
        <ImeBadge>
            <ImeBack />
            <ImeS>S</ImeS>
            <ImeText>中</ImeText>
        </ImeBadge>
    </Page>
);

export default App;
